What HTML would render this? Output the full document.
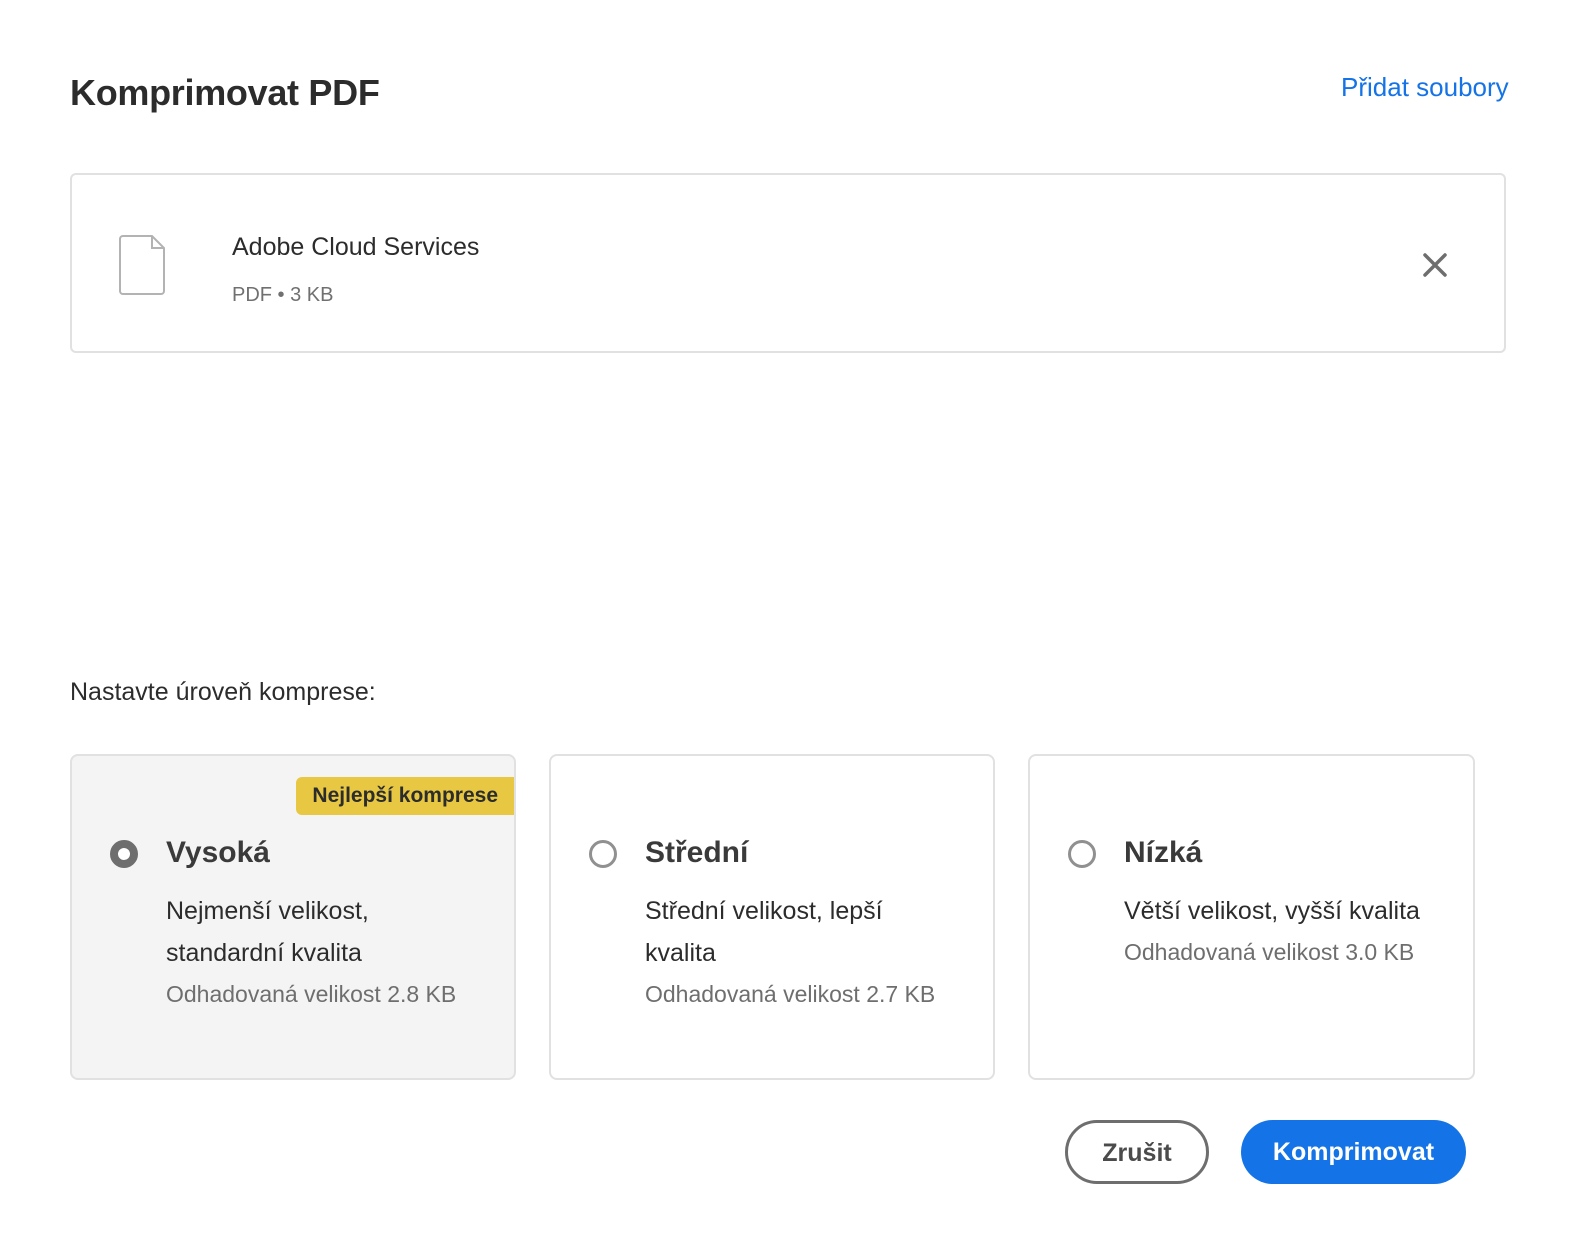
<!DOCTYPE html>
<html><head><meta charset="utf-8"><style>
*{box-sizing:border-box;margin:0;padding:0}
body{width:1572px;height:1240px;background:#fff;font-family:"Liberation Sans",sans-serif;color:#2c2c2c;position:relative;overflow:hidden}
.abs{position:absolute}
h1{position:absolute;left:70px;top:72px;font-size:36px;font-weight:bold;color:#2c2c2c;letter-spacing:-0.3px}
.add{left:1341px;top:72px;font-size:26px;color:#1473e6}
.file{left:70px;top:173px;width:1436px;height:180px;border:2px solid #e1e1e1;border-radius:6px}
.card{top:754px;width:447px;height:326px;border:2px solid #e1e1e1;border-radius:8px;background:#fff}
.card.sel{background:#f4f4f4}
.radio{position:absolute;left:38px;top:84px;width:28px;height:28px;border-radius:50%;border:3px solid #909090;background:#fff}
.sel .radio{border:8px solid #6e6e6e}
.t{position:absolute;left:94px;top:80px;font-size:30px;font-weight:bold;color:#3a3a3a}
.d{position:absolute;left:94px;top:134px;font-size:25px;line-height:42px;color:#2c2c2c;width:340px;white-space:nowrap}
.e{font-size:23px;color:#6e6e6e;line-height:40px}
.badge{position:absolute;right:0;top:21px;background:#e8c842;height:38px;padding:0 16px;font-size:21px;font-weight:bold;line-height:38px;border-radius:6px 0 0 6px;color:#2c2c2c}
.btn{top:1120px;height:64px;border-radius:32px;font-size:25px;font-weight:bold;text-align:center;line-height:60px}
</style></head><body>
<h1>Komprimovat PDF</h1>
<div class="abs add">Přidat soubory</div>
<div class="abs file">
 <svg class="abs" style="left:46px;top:60px" width="48" height="60" viewBox="0 0 48 60"><path d="M5 1H34L46 13V56a3 3 0 0 1-3 3H5a3 3 0 0 1-3-3V4a3 3 0 0 1 3-3zM34 1V13H46" fill="none" stroke="#b3b3b3" stroke-width="2"/></svg>
 <div class="abs" style="left:160px;top:58px;font-size:25px;color:#2c2c2c">Adobe Cloud Services</div>
 <div class="abs" style="left:160px;top:109px;font-size:20px;color:#707070">PDF • 3 KB</div>
 <svg class="abs" style="left:1350px;top:77px" width="26" height="26" viewBox="0 0 26 26"><path d="M3 3L23 23M23 3L3 23" stroke="#6e6e6e" stroke-width="3.5" stroke-linecap="round"/></svg>
</div>
<div class="abs" style="left:70px;top:678px;font-size:25px;color:#2c2c2c">Nastavte úroveň komprese:</div>
<div class="abs card sel" style="left:70px;width:446px"><div class="badge">Nejlepší komprese</div><div class="radio"></div><div class="t">Vysoká</div><div class="d">Nejmenší velikost,<br>standardní kvalita<div class="e">Odhadovaná velikost 2.8 KB</div></div></div>
<div class="abs card" style="left:549px;width:446px"><div class="radio"></div><div class="t">Střední</div><div class="d">Střední velikost, lepší<br>kvalita<div class="e">Odhadovaná velikost 2.7 KB</div></div></div>
<div class="abs card" style="left:1028px"><div class="radio"></div><div class="t">Nízká</div><div class="d">Větší velikost, vyšší kvalita<div class="e">Odhadovaná velikost 3.0 KB</div></div></div>
<div class="abs btn" style="left:1065px;width:144px;border:3px solid #6e6e6e;color:#4b4b4b">Zrušit</div>
<div class="abs btn" style="left:1241px;width:225px;background:#1473e6;color:#fff;line-height:64px">Komprimovat</div>
</body></html>
